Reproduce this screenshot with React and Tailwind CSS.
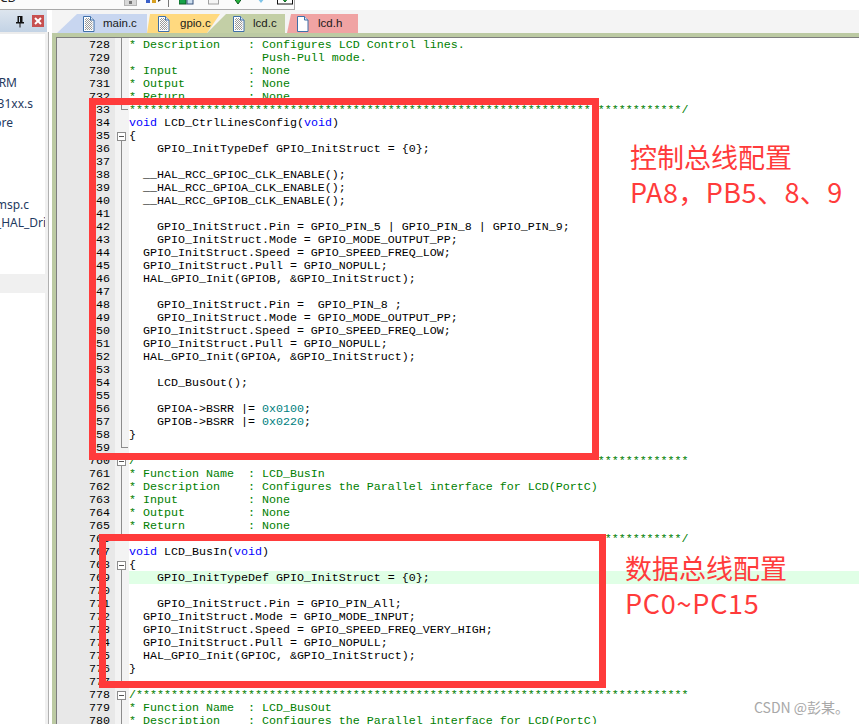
import React from "react";

const stars = "*".repeat(79);

// [line number, fold mark, text]
const rows = [
  ["728", "line", "* Description    : Configures LCD Control lines."],
  ["729", "line", "                   Push-Pull mode."],
  ["730", "line", "* Input          : None"],
  ["731", "line", "* Output         : None"],
  ["732", "line", "* Return         : None"],
  ["33", "end", stars + "/"],
  ["34", "", "void LCD_CtrlLinesConfig(void)"],
  ["35", "box", "{"],
  ["36", "line", "    GPIO_InitTypeDef GPIO_InitStruct = {0};"],
  ["37", "line", ""],
  ["38", "line", "  __HAL_RCC_GPIOC_CLK_ENABLE();"],
  ["39", "line", "  __HAL_RCC_GPIOA_CLK_ENABLE();"],
  ["40", "line", "  __HAL_RCC_GPIOB_CLK_ENABLE();"],
  ["41", "line", ""],
  ["42", "line", "    GPIO_InitStruct.Pin = GPIO_PIN_5 | GPIO_PIN_8 | GPIO_PIN_9;"],
  ["43", "line", "    GPIO_InitStruct.Mode = GPIO_MODE_OUTPUT_PP;"],
  ["44", "line", "  GPIO_InitStruct.Speed = GPIO_SPEED_FREQ_LOW;"],
  ["45", "line", "  GPIO_InitStruct.Pull = GPIO_NOPULL;"],
  ["46", "line", "  HAL_GPIO_Init(GPIOB, &GPIO_InitStruct);"],
  ["47", "line", ""],
  ["48", "line", "    GPIO_InitStruct.Pin =  GPIO_PIN_8 ;"],
  ["49", "line", "    GPIO_InitStruct.Mode = GPIO_MODE_OUTPUT_PP;"],
  ["50", "line", "  GPIO_InitStruct.Speed = GPIO_SPEED_FREQ_LOW;"],
  ["51", "line", "  GPIO_InitStruct.Pull = GPIO_NOPULL;"],
  ["52", "line", "  HAL_GPIO_Init(GPIOA, &GPIO_InitStruct);"],
  ["53", "line", ""],
  ["54", "line", "    LCD_BusOut();"],
  ["55", "line", ""],
  ["56", "line", "    GPIOA->BSRR |= 0x0100;"],
  ["57", "line", "    GPIOB->BSRR |= 0x0220;"],
  ["58", "line", "}"],
  ["59", "end", ""],
  ["760", "box", "/" + stars],
  ["761", "line", "* Function Name  : LCD_BusIn"],
  ["762", "line", "* Description    : Configures the Parallel interface for LCD(PortC)"],
  ["763", "line", "* Input          : None"],
  ["764", "line", "* Output         : None"],
  ["765", "line", "* Return         : None"],
  ["766", "end", stars + "/"],
  ["767", "", "void LCD_BusIn(void)"],
  ["768", "box", "{"],
  ["769", "line", "    GPIO_InitTypeDef GPIO_InitStruct = {0};", true],
  ["770", "line", ""],
  ["771", "line", "    GPIO_InitStruct.Pin = GPIO_PIN_All;"],
  ["772", "line", "  GPIO_InitStruct.Mode = GPIO_MODE_INPUT;"],
  ["773", "line", "  GPIO_InitStruct.Speed = GPIO_SPEED_FREQ_VERY_HIGH;"],
  ["774", "line", "  GPIO_InitStruct.Pull = GPIO_NOPULL;"],
  ["775", "line", "  HAL_GPIO_Init(GPIOC, &GPIO_InitStruct);"],
  ["776", "line", "}"],
  ["777", "end", ""],
  ["778", "box", "/" + stars],
  ["779", "line", "* Function Name  : LCD_BusOut"],
  ["780", "line", "* Description    : Configures the Parallel interface for LCD(PortC)"],
];

const sideRows = [
  { text: "RM", cls: "mt-[39px] w-[17px]" },
  { text: "31xx.s", cls: "mt-[1px] w-[33px]" },
  { text: "ore", cls: "-mt-[1px] w-[13px]" },
  { text: "msp.c", cls: "mt-[62px] w-[29px]" },
  { text: "_HAL_Driver", cls: "-mt-[2px] w-[64px]" },
];

function DocIcon({ plain }) {
  return (
    <svg width="13" height="16" viewBox="0 0 13 16" className="shrink-0">
      <defs>
        <pattern id="dither" width="2" height="2" patternUnits="userSpaceOnUse">
          <rect width="2" height="2" fill="#fff" />
          <rect width="1" height="1" fill="#9a9a9a" />
          <rect x="1" y="1" width="1" height="1" fill="#9a9a9a" />
        </pattern>
      </defs>
      <path d="M1.5.5h7l3.5 3.5v11.5h-10.5z" fill="#fff" stroke="#3f6fa8" />
      {!plain && <path d="M3 2h5l2.5 3v9h-7.5z" fill="url(#dither)" />}
      <path d="M8.5.5v3.5h3.5" fill="#dfe8f2" stroke="#3f6fa8" />
    </svg>
  );
}

function Tab({ cls, icon, label, active, plain }) {
  return (
    <div className={`flex h-[19px] items-center self-end text-[11.5px] text-[#1a1a1a] ${cls}`}>
      <DocIcon plain={plain} />
      <span className={`relative ${icon}`}>
        {label}
        {active && <span className="absolute -bottom-[3px] -left-[4px] -right-[1px] h-[2px] bg-black" />}
      </span>
    </div>
  );
}

function FoldMark({ kind }) {
  return (
    <div className="relative h-[13px] w-[14px] shrink-0 bg-[#f3f3f3]">
      {kind === "line" && <div className="absolute bottom-0 left-[6px] top-0 w-px bg-[#8c8c8c]" />}
      {kind === "end" && (
        <div className="absolute left-[6px] top-0 h-[7px] w-[7px] border-b border-l border-[#8c8c8c]" />
      )}
      {kind === "box" && (
        <>
          <div className="absolute bottom-0 left-[6px] top-[11px] w-px bg-[#8c8c8c]" />
          <div className="absolute left-[2px] top-[3px] flex h-[9px] w-[9px] items-center justify-center border border-[#8c8c8c] bg-white">
            <div className="h-px w-[5px] bg-[#555]" />
          </div>
        </>
      )}
    </div>
  );
}

function CodeText({ text }) {
  if (/^(\*|\/\*|\s{19}Push)/.test(text)) return <span className="text-[#008000]">{text}</span>;
  return text.split(/(void|0x[0-9a-f]+)/).map((part, i) => {
    if (part === "void") return <span key={i} className="text-[#0000ff]">{part}</span>;
    if (part.startsWith("0x")) return <span key={i} className="text-[#008080]">{part}</span>;
    return <span key={i}>{part}</span>;
  });
}

function Toolbar() {
  return (
    <div className="flex h-[10px] overflow-hidden bg-white">
      <div className="relative flex w-[295px] shrink-0 items-start border-b border-r border-[#a9a9a9] bg-[#fbfbfb]">
        <span className="absolute -top-[11px] left-0 font-['Noto_Sans',sans-serif] text-[12px] text-[#222]">CD</span>
        <div className="-mt-[2px] ml-[124px] flex h-[8px] w-[13px] justify-center border border-[#b5b5b5] bg-[#d8d8d8]">
          <div className="mt-[2px] h-[3px] w-[3px] bg-[#777]" />
        </div>
        <svg width="16" height="9" viewBox="0 0 16 9" className="-mt-[5px] ml-[8px]">
          <rect x="1" y="4" width="4" height="4" fill="#3a5fc8" />
          <rect x="7" y="4" width="4" height="4" fill="#d8a020" />
          <path d="M13 3l3 2-3 2z" fill="#333" />
        </svg>
        <div className="ml-[7px] h-[7px] w-px bg-[#777]" />
        <svg width="15" height="9" viewBox="0 0 15 9" className="-mt-[4px] ml-[10px]">
          <rect x="0" y="0" width="7" height="8" fill="#17a34a" stroke="#0c5a20" />
          <rect x="8" y="0" width="6" height="8" fill="#cfe0f0" stroke="#34507a" />
        </svg>
        <svg width="11" height="9" viewBox="0 0 11 9" className="-mt-[4px] ml-[14px]">
          <rect x="0.5" y="0" width="10" height="8" fill="#f5f5f5" stroke="#a0a0a0" />
        </svg>
        <svg width="10" height="9" viewBox="0 0 10 9" className="-mt-[4px] ml-[14px]">
          <path d="M0 1h10l-5 7z" fill="#27b33c" stroke="#0c5a20" />
        </svg>
        <svg width="8" height="9" viewBox="0 0 8 9" className="-mt-[5px] ml-[14px]">
          <path d="M2 0h4v3h2l-4 5-4-5h2z" fill="#7fc4e8" />
        </svg>
        <svg width="16" height="9" viewBox="0 0 16 9" className="-mt-[4px] ml-[12px]">
          <rect x="0.5" y="0" width="15" height="8" fill="#fff" stroke="#111" />
          <path d="M4 1l4 5 4-5z" fill="#27b33c" stroke="#0c5a20" />
        </svg>
      </div>
    </div>
  );
}

function Sidebar() {
  return (
    <div className="flex w-[52px] shrink-0 flex-col bg-white">
      <div className="flex h-[22px] w-[47px] items-center bg-gradient-to-b from-[#dde5ee] to-[#c3d3e5]">
        <svg width="10" height="13" viewBox="0 0 10 13" className="ml-[15px]">
          <path d="M2.5 1h5v6h1.5v1.5h-3.5v4h-1v-4h-3.5v-1.5h1.5z" fill="#111" />
          <path d="M4 2h1v5h-1z" fill="#c3d3e5" />
        </svg>
        <div className="ml-[7px] flex h-[12px] w-[12px] items-center justify-center bg-[#c75050]">
          <svg width="8" height="8" viewBox="0 0 8 8">
            <path d="M1 1l6 6M7 1l-6 6" stroke="#fff" strokeWidth="2" />
          </svg>
        </div>
      </div>
      <div className="flex flex-1">
        <div className="w-[45px] overflow-hidden border-t-2 border-[#ececec] bg-white font-['Noto_Sans',sans-serif] text-[12px] leading-[20px] text-[#1f3a5f]">
          {sideRows.map((r) => (
            <div key={r.text} className={`h-[20px] whitespace-nowrap ${r.cls}`}>
              <div className="flex justify-end">
                <span className="shrink-0">{r.text}</span>
              </div>
            </div>
          ))}
          <div className="mt-[41px] h-[19px] bg-[#f0f0f0]" />
        </div>
        <div className="w-[3px] bg-[#f0f0f0]" />
        <div className="w-px bg-[#b0b0b0]" />
      </div>
    </div>
  );
}

export default function App() {
  return (
    <div className="relative h-[724px] w-[859px] overflow-hidden bg-white">
      <Toolbar />
      <div className="flex h-[714px]">
        <Sidebar />
        <div className="flex min-w-0 flex-1 flex-col">
          <div className="flex h-[23px] shrink-0 bg-[#f4f4f4] pl-[5px] font-['Liberation_Sans',sans-serif]">
            <Tab
              cls="w-[90px] bg-[#c8d6f0] pl-[25px] [clip-path:polygon(20px_0,100%_0,100%_100%,0_100%)]"
              icon="ml-[8px]"
              label="main.c"
            />
            <Tab
              cls="w-[73px] bg-[#ffd97f] pl-[10px] [clip-path:polygon(3px_0,100%_0,60px_100%,0_100%)]"
              icon="ml-[10px]"
              label="gpio.c"
            />
            <Tab
              cls="-ml-[13px] w-[78px] bg-[#c3cfa6] pl-[25px] [clip-path:polygon(19px_0,100%_0,100%_100%,0_100%)]"
              icon="ml-[8px]"
              label="lcd.c"
              active
            />
            <Tab
              cls="ml-[2px] w-[71px] bg-[#f0a3a3] pl-[9px] [clip-path:polygon(4px_0,100%_0,100%_100%,0_100%)]"
              icon="ml-[9px]"
              label="lcd.h"
              plain
            />
          </div>
          <div className="flex-1 overflow-hidden border-l-4 border-t-4 border-[#bccaa3]">
            <div className="h-full border-l border-t border-[#7d7d7d] font-['Liberation_Mono',monospace] text-[11.67px] leading-[15px] text-black">
              {rows.map(([num, fold, text, current]) => (
                <div key={num} className="flex h-[13px]">
                  <div className="w-[58px] shrink-0 bg-[#e8e8e8] pr-[5px] text-right">{num}</div>
                  <FoldMark kind={fold} />
                  <div className={`flex-1 whitespace-pre ${current ? "bg-[#e0ffe6]" : ""}`}>
                    <CodeText text={text} />
                  </div>
                </div>
              ))}
            </div>
          </div>
        </div>
      </div>

      {/* red note boxes drawn over the shot */}
      <div className="absolute left-[89px] top-[98px] h-[362px] w-[510px] border-[7px] border-[#ff3b3b]" />
      <div className="absolute left-[99px] top-[534px] h-[154px] w-[507px] border-[7px] border-[#ff3b3b]" />
      <div className="absolute left-[630px] top-[139px] font-['Noto_Sans_CJK_SC',sans-serif] text-[27px] leading-[35px] text-[#ff3b3b]">
        <div>控制总线配置</div>
        <div className="whitespace-nowrap tracking-[0.45px]">PA8，PB5、8、9</div>
      </div>
      <div className="absolute left-[625px] top-[550px] font-['Noto_Sans_CJK_SC',sans-serif] text-[27px] leading-[35px] text-[#ff3b3b]">
        <div>数据总线配置</div>
        <div className="whitespace-nowrap tracking-[0.75px]">PC0~PC15</div>
      </div>
      <div className="absolute left-[754px] top-[697px] font-['Noto_Sans_CJK_SC',sans-serif] text-[14px] leading-[20px] text-[#a8a8a8]">
        CSDN @彭某。
      </div>
    </div>
  );
}
